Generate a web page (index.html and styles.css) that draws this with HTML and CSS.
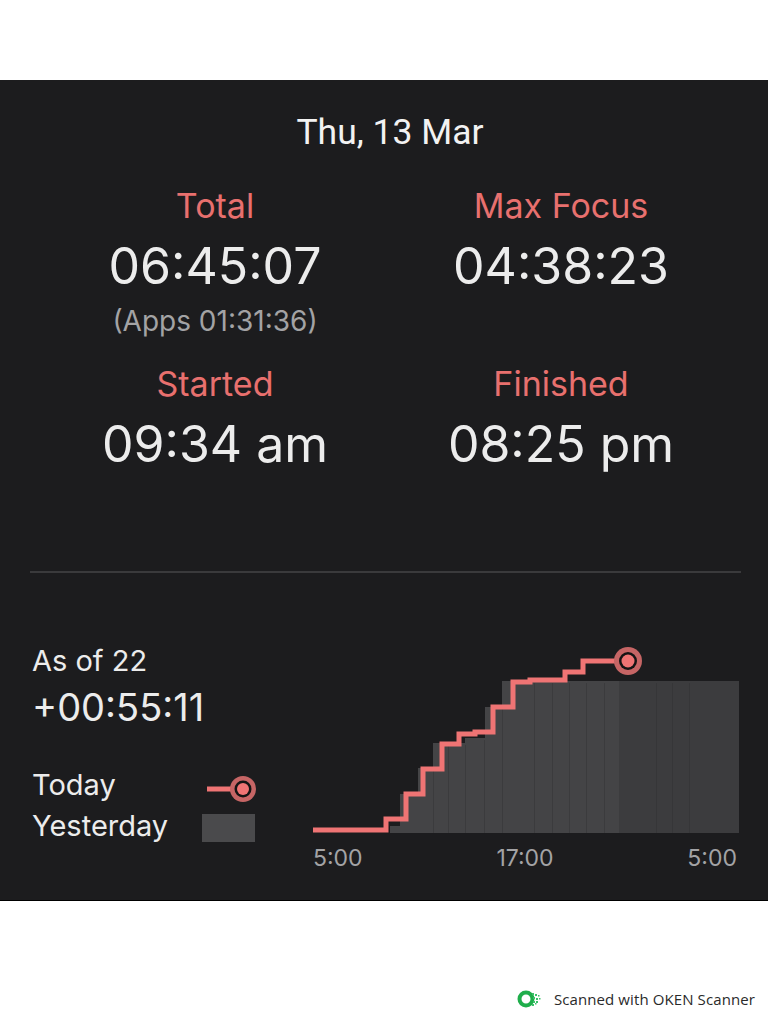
FILE: index.html
```html
<!DOCTYPE html>
<html lang="en">
<head>
<meta charset="utf-8">
<title>Focus summary</title>
<link rel="stylesheet" href="styles.css">
</head>
<body>
<div class="top-space"></div>
<main class="panel">
  <h1 class="date">Thu, 13 Mar</h1>
  <section class="stats">
    <div class="stat">
      <div class="label">Total</div>
      <div class="value">06:45:07</div>
      <div class="sub">(Apps 01:31:36)</div>
    </div>
    <div class="stat">
      <div class="label">Max Focus</div>
      <div class="value">04:38:23</div>
    </div>
    <div class="stat">
      <div class="label">Started</div>
      <div class="value">09:34 am</div>
    </div>
    <div class="stat">
      <div class="label">Finished</div>
      <div class="value">08:25 pm</div>
    </div>
  </section>
  <div class="divider"></div>
  <section class="chart-section">
    <div class="legend">
      <div class="asof">As of 22</div>
      <div class="delta">+00:55:11</div>
      <div class="keys">
        <div class="key">
          <span class="key-label">Today</span>
          <svg class="key-today" width="56" height="30" viewBox="0 0 56 30">
            <line x1="5" y1="15" x2="36" y2="15" stroke="#ef7474" stroke-width="5"/>
            <circle cx="41" cy="15" r="13" fill="#c66565"/>
            <circle cx="41" cy="15" r="8.5" fill="#141414"/>
            <circle cx="41" cy="15" r="6" fill="#ef7474"/>
          </svg>
        </div>
        <div class="key">
          <span class="key-label">Yesterday</span>
          <span class="key-yesterday"></span>
        </div>
      </div>
    </div>
    <div class="chart">
      <svg class="chart-svg" width="445" height="200" viewBox="300 645 445 200">
        <path d="M390 833 V826 H400 V794 H418 V768 H433 V743 H465 V738 H485 V707 H502 V681 H619 V833 Z" fill="#444446"/>
        <rect x="619" y="681" width="120" height="152" fill="#3c3c3e"/>
        <g stroke="#3b3b3d" stroke-width="1">
          <line x1="433.5" y1="770" x2="433.5" y2="833"/>
          <line x1="448.5" y1="745" x2="448.5" y2="833"/>
          <line x1="465.5" y1="745" x2="465.5" y2="833"/>
          <line x1="484.5" y1="740" x2="484.5" y2="833"/>
          <line x1="502.5" y1="709" x2="502.5" y2="833"/>
          <line x1="534.5" y1="683" x2="534.5" y2="833"/>
          <line x1="552.5" y1="683" x2="552.5" y2="833"/>
          <line x1="569.5" y1="683" x2="569.5" y2="833"/>
          <line x1="586.5" y1="683" x2="586.5" y2="833"/>
          <line x1="604.5" y1="683" x2="604.5" y2="833"/>
        </g>
        <g stroke="#363638" stroke-width="1">
          <line x1="656.5" y1="683" x2="656.5" y2="833"/>
          <line x1="672.5" y1="683" x2="672.5" y2="833"/>
          <line x1="689.5" y1="683" x2="689.5" y2="833"/>
        </g>
        <path d="M313 830 H386 V819 H406 V794 H423 V769 H442 V744 H459 V734 H475 V732 H493 V707 H513 V682 H530 V680 H565 V672 H583 V661 H615" fill="none" stroke="#ef7474" stroke-width="5" stroke-linejoin="miter" stroke-linecap="butt"/>
        <circle cx="628" cy="661" r="14" fill="#c66565"/>
        <circle cx="628" cy="661" r="9" fill="#141414"/>
        <circle cx="628" cy="661" r="6.5" fill="#ef7474"/>
      </svg>
      <div class="axis">
        <span>5:00</span>
        <span>17:00</span>
        <span>5:00</span>
      </div>
    </div>
  </section>
</main>
<footer class="footer">
  <div class="scan-badge">
    <svg class="oken-logo" width="26" height="20" viewBox="0 0 26 20">
      <circle cx="9" cy="10" r="6.5" fill="none" stroke="#1fae4b" stroke-width="4"/>
      <g fill="#3cc26a">
        <rect x="15" y="4" width="2" height="2"/>
        <rect x="18" y="5" width="2" height="2"/>
        <rect x="16" y="8" width="2" height="2"/>
        <rect x="19" y="9" width="2" height="2"/>
        <rect x="22" y="9" width="1.5" height="1.5"/>
        <rect x="16" y="12" width="2" height="2"/>
        <rect x="19" y="12" width="2" height="2"/>
        <rect x="15" y="15" width="2" height="2"/>
        <rect x="18" y="14" width="1.5" height="1.5"/>
        <rect x="21" y="6" width="1.5" height="1.5"/>
      </g>
    </svg>
    <span class="scan-text">Scanned with OKEN Scanner</span>
  </div>
</footer>
</body>
</html>
```

FILE: styles.css
```css
* { box-sizing: border-box; }

html, body {
  margin: 0;
  padding: 0;
  background: #ffffff;
}

body {
  width: 768px;
  font-family: Inter, "Liberation Sans", sans-serif;
}

.top-space {
  height: 80px;
}

.panel {
  height: 821px;
  background: #1c1c1e;
  border-bottom: 1px solid #000;
  padding-top: 32px;
  color: #ececec;
}

.date {
  margin: 0;
  font-family: Roboto, "Liberation Sans", sans-serif;
  font-weight: 400;
  font-size: 35.5px;
  line-height: 40px;
  text-align: center;
  padding-left: 12px;
  color: #f2f2f2;
}

.stats {
  margin-top: 34px;
  padding: 0 34px 0 42px;
  display: grid;
  grid-template-columns: 1fr 1fr;
  row-gap: 27px;
}

.stat {
  display: flex;
  flex-direction: column;
  align-items: center;
}

.label {
  font-size: 34px;
  line-height: 40px;
  color: #e8706e;
}

.value {
  margin-top: 12px;
  font-size: 50px;
  line-height: 56px;
  color: #ececec;
}

.sub {
  margin-top: 11px;
  font-size: 28px;
  line-height: 32px;
  color: #a3a3a5;
}

.divider {
  margin: 99px 27px 0 30px;
  height: 2px;
  background: #3a3a3c;
}

.chart-section {
  display: flex;
  margin-top: 71px;
}

.legend {
  width: 300px;
  padding-left: 32px;
}

.asof {
  font-size: 29px;
  line-height: 34px;
}

.delta {
  margin-top: 7px;
  font-size: 38px;
  line-height: 44px;
}

.keys {
  margin-top: 39px;
  display: flex;
  flex-direction: column;
  gap: 7px;
}

.key {
  display: flex;
  align-items: center;
  height: 34px;
}

.key-label {
  width: 170px;
  font-size: 29px;
  line-height: 34px;
}

.key-today {
  margin-top: 8px;
}

.key-yesterday {
  width: 53px;
  height: 28px;
  background: #4a4a4c;
  margin-top: 4px;
}

.chart {
  display: flex;
  flex-direction: column;
}

.chart-svg {
  display: block;
  margin-top: 1px;
}

.axis {
  display: flex;
  justify-content: space-between;
  width: 437px;
  padding-left: 13px;
  font-size: 23px;
  line-height: 26px;
  color: #a3a3a5;
}

.footer {
  height: 123px;
  display: flex;
  justify-content: flex-end;
  align-items: flex-start;
  padding-top: 88px;
  padding-right: 13px;
}

.scan-badge {
  display: flex;
  align-items: center;
  gap: 11px;
}

.scan-text {
  font-family: "Open Sans", "Noto Sans", sans-serif;
  font-size: 15px;
  letter-spacing: 0.1px;
  color: #2a2a2a;
}
```
